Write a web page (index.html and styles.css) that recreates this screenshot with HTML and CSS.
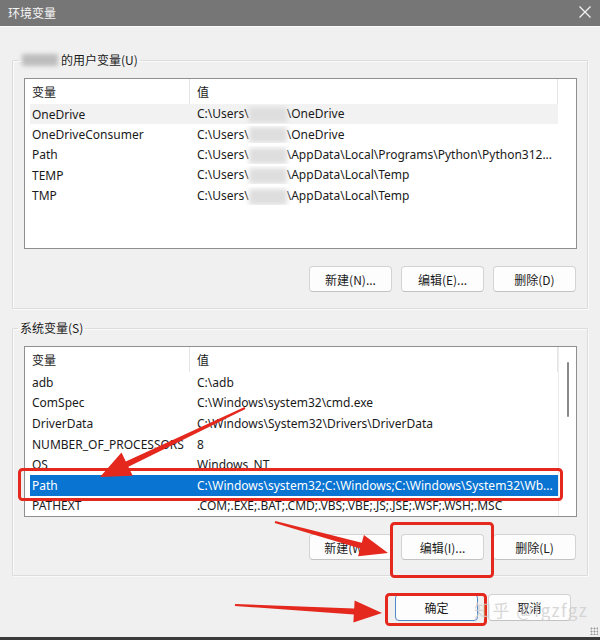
FILE: index.html
```html
<!DOCTYPE html>
<html lang="zh-CN">
<head>
<meta charset="utf-8">
<title>环境变量</title>
<link rel="stylesheet" href="styles.css">
</head>
<body>
<div class="window">
  <div class="titlebar">
    <span class="title">环境变量</span>
    <svg class="close" width="14" height="14" viewBox="0 0 14 14"><path d="M1.5 1.5 L12.5 12.5 M12.5 1.5 L1.5 12.5" stroke="#f4f4f4" stroke-width="1.2" fill="none"/></svg>
  </div>
  <div class="content">
    <fieldset class="group group-user">
      <legend><span class="blur-name"></span>的用户变量(U)</legend>
      <div class="listbox">
        <div class="lv-header"><div class="col-name">变量</div><div class="col-val">值</div><div class="col-rest"></div></div>
        <div class="row hover"><div class="col-name">OneDrive</div><div class="col-val">C:\Users\<span class="blur"></span>\OneDrive</div></div>
        <div class="row"><div class="col-name">OneDriveConsumer</div><div class="col-val">C:\Users\<span class="blur"></span>\OneDrive</div></div>
        <div class="row"><div class="col-name">Path</div><div class="col-val">C:\Users\<span class="blur"></span>\AppData\Local\Programs\Python\Python312...</div></div>
        <div class="row"><div class="col-name">TEMP</div><div class="col-val">C:\Users\<span class="blur"></span>\AppData\Local\Temp</div></div>
        <div class="row"><div class="col-name">TMP</div><div class="col-val">C:\Users\<span class="blur"></span>\AppData\Local\Temp</div></div>
      </div>
      <div class="btnrow">
        <button class="btn">新建(N)...</button>
        <button class="btn">编辑(E)...</button>
        <button class="btn">删除(D)</button>
      </div>
    </fieldset>

    <fieldset class="group group-sys">
      <legend>系统变量(S)</legend>
      <div class="listbox has-scroll">
        <div class="lv-main">
          <div class="lv-header"><div class="col-name">变量</div><div class="col-val">值</div></div>
          <div class="row"><div class="col-name">adb</div><div class="col-val">C:\adb</div></div>
          <div class="row"><div class="col-name">ComSpec</div><div class="col-val">C:\Windows\system32\cmd.exe</div></div>
          <div class="row"><div class="col-name">DriverData</div><div class="col-val">C:\Windows\System32\Drivers\DriverData</div></div>
          <div class="row"><div class="col-name">NUMBER_OF_PROCESSORS</div><div class="col-val">8</div></div>
          <div class="row"><div class="col-name">OS</div><div class="col-val">Windows_NT</div></div>
          <div class="row selected"><div class="col-name">Path</div><div class="col-val">C:\Windows\system32;C:\Windows;C:\Windows\System32\Wb...</div></div>
          <div class="row"><div class="col-name">PATHEXT</div><div class="col-val">.COM;.EXE;.BAT;.CMD;.VBS;.VBE;.JS;.JSE;.WSF;.WSH;.MSC</div></div>
        </div>
        <div class="scrollbar"><div class="thumb"></div></div>
      </div>
      <div class="btnrow">
        <button class="btn">新建(W)...</button>
        <button class="btn">编辑(I)...</button>
        <button class="btn">删除(L)</button>
      </div>
    </fieldset>

    <div class="dialog-buttons">
      <button class="btn btn-default">确定</button>
      <button class="btn">取消</button>
    </div>
  </div>
  <div class="bottom-edge"></div>

  <svg class="annot" width="600" height="640" viewBox="0 0 600 640">
    <g fill="none" stroke="#e5281e" stroke-width="3">
      <rect x="19.5" y="469.5" width="542" height="30" rx="3"/>
      <rect x="391.5" y="523.5" width="101" height="53" rx="3"/>
      <rect x="386.5" y="594.5" width="99" height="30" rx="3"/>
    </g>
    <g fill="#e5281e">
      <polygon points="245.4,408.9 128.4,466.8 132.7,475.8 100,477 121.5,452.4 125.8,461.4 244.6,407.1"/>
      <polygon points="274.7,523 360.2,548.5 358.1,556.2 388,553 363.9,535 361.8,542.7 275.3,521"/>
      <polygon points="234.9,606 353.8,614.4 353.4,622.4 382,613 354.6,600.4 354.2,608.4 235.1,604"/>
    </g>
  </svg>
  <div class="watermark">知乎 @fgzfgz</div>
  <div class="grip"></div>
</div>
</body>
</html>
```

FILE: styles.css
```css
* { box-sizing: border-box; }
html, body { margin: 0; padding: 0; }
body {
  width: 600px;
  height: 640px;
  overflow: hidden;
  background: #f0f0f0;
  font-family: "Noto Sans", "Noto Sans CJK SC", sans-serif;
  font-size: 12px;
  color: #1a1a1a;
}
.window {
  position: relative;
  width: 600px;
  height: 640px;
  display: flex;
  flex-direction: column;
}
.titlebar {
  height: 27px;
  background: #767676;
  border-bottom: 1px solid #fafafa;
  display: flex;
  align-items: center;
  justify-content: space-between;
  padding: 0 8px 1px 8px;
  flex: none;
}
.title {
  color: #f6f6f6;
  font-family: "Noto Sans CJK SC", sans-serif;
  font-size: 12px;
}
.close { margin-top: -2px; }
.content {
  flex: 1;
  display: flex;
  flex-direction: column;
}
.group {
  margin: 0 12px;
  border: 1px solid #dcdcdc;
  box-shadow: 1px 1px 0 #fafafa, inset 1px 1px 0 #fafafa;
  border-radius: 1px;
  min-width: 0;
}
.group legend {
  padding: 0 2px;
  margin-left: -6px;
  line-height: 16px;
  height: 16px;
  font-family: "Noto Sans CJK SC", sans-serif;
  font-size: 12px;
  display: flex;
  align-items: center;
}
.group-user {
  margin-top: 25px;
  padding: 10px 10px 16px 11px;
}
.group-sys {
  margin-top: 11px;
  padding: 10px 10px 15px 11px;
}
.blur-name {
  display: inline-block;
  width: 36px;
  height: 12px;
  background: #bdbdbd;
  filter: blur(2px);
  margin-left: 2px;
  margin-right: 3px;
}
.listbox {
  height: 171px;
  border: 1px solid #8f8f8f;
  background: #fff;
  padding-left: 5px;
  overflow: hidden;
}
.listbox.has-scroll {
  display: flex;
  padding-left: 0;
}
.lv-main {
  flex: 1;
  padding-left: 5px;
}
.lv-header {
  height: 25px;
  display: flex;
  align-items: center;
  font-family: "Noto Sans CJK SC", sans-serif;
}
.lv-header .col-name,
.lv-header .col-val {
  height: 25px;
  line-height: 25px;
  border-right: 1px solid #e5e5e5;
}
.lv-header .col-val { width: 368px; flex: none; }
.lv-header .col-rest { flex: 1; }
.row {
  height: 20.4px;
  display: flex;
  align-items: center;
  width: 528px;
  white-space: nowrap;
}
.col-name {
  width: 160px;
  flex: none;
  padding-left: 2px;
  overflow: hidden;
  white-space: nowrap;
}
.col-val {
  padding-left: 7px;
  flex: 1;
  white-space: nowrap;
  overflow: hidden;
}
.row.hover { background: #f2f2f2; }
.row.selected { background: #0a74d2; color: #fff; }
.group-sys .row { height: 20.6px; }
.blur {
  display: inline-block;
  width: 38px;
  height: 16px;
  vertical-align: middle;
  background: #dedede;
  filter: blur(2.5px);
}
.scrollbar {
  width: 18px;
  flex: none;
  border-left: 1px solid #ececec;
}
.thumb {
  width: 2px;
  height: 55px;
  margin: 15px 0 0 8px;
  background: #8a8a8a;
  border-radius: 1px;
}
.btnrow {
  display: flex;
  justify-content: flex-end;
  gap: 9px;
  margin-top: 17px;
  padding-right: 1px;
}
.btn {
  width: 83px;
  height: 26px;
  border: 1px solid #d3d3d3;
  border-bottom-color: #c2c2c2;
  border-radius: 4px;
  background: #fdfdfd;
  font-family: "Noto Sans CJK SC", sans-serif;
  font-size: 12px;
  color: #1a1a1a;
  padding: 0;
}
.dialog-buttons {
  display: flex;
  justify-content: flex-end;
  gap: 10px;
  padding-right: 29px;
  margin-top: 18px;
}
.dialog-buttons .btn { height: 27px; }
.btn-default {
  border: 1px solid #4f86c6;
}
.bottom-edge {
  height: 3px;
  background: #3a3a3a;
  flex: none;
}
.annot {
  position: absolute;
  left: 0;
  top: 0;
  pointer-events: none;
}
.watermark {
  position: absolute;
  left: 474px;
  top: 599px;
  font-family: "Noto Sans CJK SC", sans-serif;
  font-size: 17px;
  line-height: 22px;
  color: rgba(205, 205, 205, 0.8);
  letter-spacing: 1.5px;
  pointer-events: none;
}
.grip {
  position: absolute;
  right: 2px;
  bottom: 5px;
  width: 8px;
  height: 8px;
  background-image: radial-gradient(circle, #9a9a9a 0.8px, transparent 1.2px);
  background-size: 3px 3px;
}
```
